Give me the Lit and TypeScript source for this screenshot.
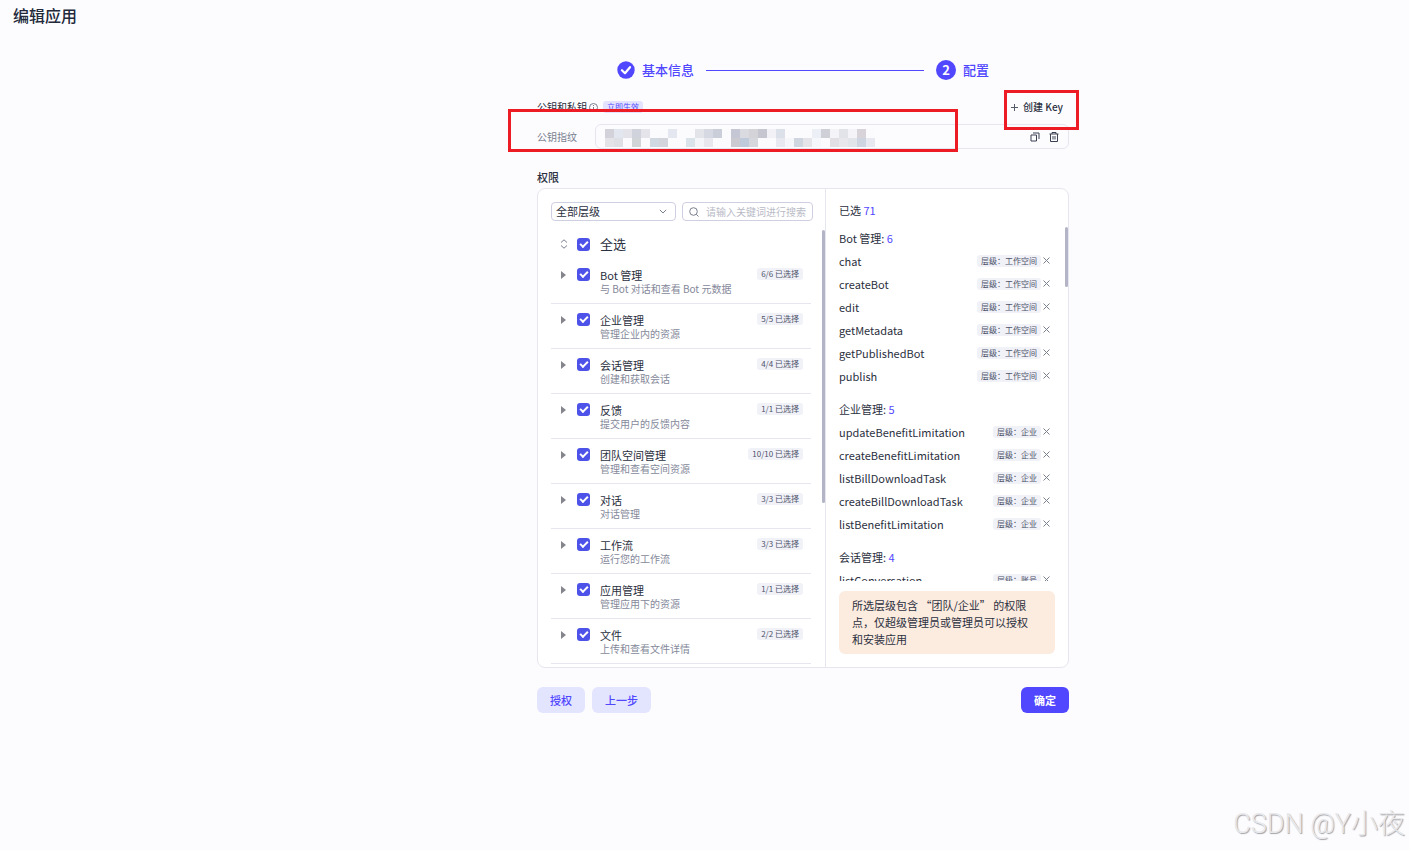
import { LitElement, html, css } from "lit";
import { customElement, state } from "lit/decorators.js";

interface Category {
  name: string;
  desc: string;
  count: number;
}

interface Group {
  name: string;
  level: string;
  total: number;
  items: string[];
}

const CATEGORIES: Category[] = [
  { name: "Bot 管理", desc: "与 Bot 对话和查看 Bot 元数据", count: 6 },
  { name: "企业管理", desc: "管理企业内的资源", count: 5 },
  { name: "会话管理", desc: "创建和获取会话", count: 4 },
  { name: "反馈", desc: "提交用户的反馈内容", count: 1 },
  { name: "团队空间管理", desc: "管理和查看空间资源", count: 10 },
  { name: "对话", desc: "对话管理", count: 3 },
  { name: "工作流", desc: "运行您的工作流", count: 3 },
  { name: "应用管理", desc: "管理应用下的资源", count: 1 },
  { name: "文件", desc: "上传和查看文件详情", count: 2 },
];

const GROUPS: Group[] = [
  {
    name: "Bot 管理",
    level: "工作空间",
    total: 6,
    items: ["chat", "createBot", "edit", "getMetadata", "getPublishedBot", "publish"],
  },
  {
    name: "企业管理",
    level: "企业",
    total: 5,
    items: [
      "updateBenefitLimitation",
      "createBenefitLimitation",
      "listBillDownloadTask",
      "createBillDownloadTask",
      "listBenefitLimitation",
    ],
  },
  {
    name: "会话管理",
    level: "账号",
    total: 4,
    items: ["listConversation"],
  },
];

/* Two rows of 9px cells that cover the key fingerprint. */
const MASK: string[][] = [
  ["#d3d2da", "#e2e6ee", "#e5e3ea", "#d0d3dc", "#e5e4ea", "", "", "#e4e7f0", "", "", "#e3e4e9", "#d6d9e2", "#c9ced9", "", "#c5c7d5", "#d9dbe0", "#d3d3d8", "#c6c6d1", "#f2f2f6", "#dce0e8", "", "", "", "#eceff6", "#cfcfd8", "#f4f4f8", "#e2e3e9", "#f3f3f8", "#d8d3d8", ""],
  ["#e4e3e8", "#dfe0e5", "", "#d1d5d8", "", "#d0d9e2", "#d4d4dc", "", "", "#dae2ea", "#f4f5f9", "#e7e7ed", "", "", "#cbcad0", "#bfcada", "#d6d7dc", "", "", "#e8e9f0", "#f5f6fa", "#d0d6e0", "#e5e4e9", "#f5f7fb", "", "#e2dfe4", "#e7e7ec", "#e1e5ea", "#ced5e0", "#e8e8f0"],
];

@customElement("app-root")
export class AppRoot extends LitElement {
  @state() private groups = GROUPS;

  static styles = css`
    :host {
      display: block;
      position: relative;
      min-height: 100vh;
      overflow: hidden;
      box-sizing: border-box;
      background: #fcfcff;
      color: #2b3040;
      font-family: "Noto Sans CJK SC", "Noto Sans", sans-serif;
      font-size: 11px;
      line-height: 16px;
    }
    *, *::after { box-sizing: border-box; }
    button, input, select { font: inherit; color: inherit; margin: 0; }
    button { border: 0; padding: 0; background: none; cursor: pointer; }
    svg { display: block; flex: none; }
    h1, h2, h3, p, ul { margin: 0; padding: 0; font: inherit; list-style: none; }

    .title { padding: 3px 13px 4px; font-size: 16px; line-height: 24px; font-weight: 500; color: #22293a; }
    main { padding: 29px 0 0 197px; }
    .content { width: 532px; max-width: 100%; margin: 0 auto; }

    .steps {
      display: flex; align-items: center; justify-content: center;
      height: 20px; font-size: 13px; font-weight: 500; color: #5147ff;
    }
    .step { display: flex; align-items: center; gap: 7px; }
    .line { width: 218px; height: 1px; margin: 0 12px; background: #5147ff; }
    .num {
      display: grid; place-items: center; width: 20px; height: 20px; border-radius: 50%;
      background: #5147ff; color: #fff; line-height: 20px; font-weight: 700;
    }

    .keys { position: relative; margin-top: 15px; font-size: 10px; }
    .keyhead { display: flex; align-items: center; height: 24px; }
    .keyhead .info { margin: 0 5px 0 2px; color: #7a7f8e; }
    .now { padding: 0 4px; border-radius: 3px; background: #e3e3ff; color: #5147ff; font-size: 8px; line-height: 12px; }
    .create { display: flex; align-items: center; gap: 5px; margin-left: auto; padding: 4px 6px; font-weight: 500; }
    .create svg { color: #555a69; }

    .keyrow { display: flex; align-items: center; height: 25px; margin-top: 5px; color: #7a7f8e; }
    .field {
      display: flex; align-items: flex-start; flex: 1; height: 25px; margin-left: 18px; padding: 4px 9px 0;
      border: 1px solid #e6e6f0; border-radius: 6px; color: #3a4052;
    }
    .mask { display: grid; grid-template-columns: repeat(30, 9px); grid-auto-rows: 9px; }
    .actions { display: flex; gap: 9px; margin-left: auto; padding-top: 3px; }

    .label { margin-top: 20px; font-weight: 500; }
    .panel {
      display: grid; grid-template-columns: 288px 1fr; height: 480px; margin-top: 3px;
      border: 1px solid #e6e6f0; border-radius: 8px; background: #fff;
    }
    .left { position: relative; overflow: hidden; padding: 13px 12px 0 13px; border-right: 1px solid #e6e6f0; }
    .filters { display: flex; gap: 6px; }
    .box {
      position: relative; display: flex; align-items: center; height: 19px;
      border: 1px solid #cfcfe2; border-radius: 4px; background: #fff;
    }
    .level { flex: none; width: 125px; }
    .level select { appearance: none; width: 100%; height: 17px; padding: 0 4px; border: 0; outline: 0; background: none; line-height: 15px; }
    .level svg { position: absolute; right: 8px; pointer-events: none; }
    .search { flex: 1; min-width: 0; padding-left: 6px; gap: 7px; color: #7a7f8e; }
    .search input { flex: 1; min-width: 0; height: 17px; padding: 0; border: 0; outline: 0; background: none; font-size: 10px; }
    .search input::placeholder { color: #b8bac6; opacity: 1; }
    .all { display: flex; align-items: center; height: 20px; margin: 13px 0 5px; padding-left: 9px; font-size: 13px; }
    .all svg { color: #7a7f8e; margin-right: 9px; }
    .check {
      appearance: none; flex: none; width: 13px; height: 13px; margin: 0; border-radius: 3px; background: #4d53e8;
      display: grid; place-items: center;
    }
    .check::after {
      content: ""; width: 8px; height: 5px; margin-top: -2px;
      border-left: 2px solid #fff; border-bottom: 2px solid #fff; rotate: -45deg;
    }
    .check:not(:checked) { background: #fff; border: 1px solid #cfcfe2; }
    .all label { margin-left: 10px; }
    .cat { display: flex; align-items: flex-start; height: 45px; margin-right: 2px; padding: 9px 8px 0 10px; border-bottom: 1px solid #e6e6f0; }
    .arrow { width: 5px; height: 13px; margin-right: 11px; display: grid; place-items: center; color: #85868d; }
    .cat label { flex: 1; margin-left: 10px; line-height: 15px; }
    .cat .desc { display: block; font-size: 10px; line-height: 12px; color: #85899a; }
    .tag { padding: 0 4px; border-radius: 3px; background: #f1f1f8; color: #4c5268; font-size: 8px; line-height: 12px; white-space: nowrap; }
    .bar { position: absolute; right: 0; width: 3px; border-radius: 2px; background: #b3b5c6; }
    .left .bar { top: 41px; height: 273px; }
    .right .bar { top: 38px; height: 60px; }

    .right { position: relative; display: flex; flex-direction: column; min-height: 0; padding: 13px 13px 13px; }
    .count { color: #5147ff; }
    .picked { flex: 1; overflow: hidden; min-height: 0; margin-top: 9px; }
    .group { margin-bottom: 10px; }
    .group h3 { line-height: 23px; }
    .item { display: flex; align-items: center; height: 23px; padding: 0 5px 2px 0; }
    .item .tag { margin-left: auto; }
    .item button { margin-left: 2px; color: #7a7f8e; }
    .notice { margin-top: 10px; padding: 6px 18px 6px 13px; border-radius: 6px; background: #fcebdf; line-height: 17px; }

    .footer { display: flex; gap: 7px; margin-top: 19px; }
    .btn { height: 26px; padding: 0 13px; border-radius: 6px; background: #e3e5ff; color: #5147ff; font-weight: 500; }
    .primary { margin-left: auto; background: #5147ff; color: #fff; font-weight: 700; }

    .frame { position: absolute; border: 3px solid #ed1c24; pointer-events: none; }
    .frame-key { left: -29px; top: 14px; width: 450px; height: 43px; }
    .frame-create { right: -10px; top: -5px; width: 75px; height: 40px; }
    .watermark {
      position: absolute; right: 4px; bottom: 6px; color: #e9e9ec; font-size: 27px; line-height: 40px; font-weight: 300;
      font-family: Roboto, "Noto Sans CJK SC", sans-serif;
      text-shadow: 1px 1px 1px #a0a0a4; pointer-events: none;
    }
  `;

  private remove(group: Group, item: string) {
    this.groups = this.groups.map((g) =>
      g === group ? { ...g, total: g.total - 1, items: g.items.filter((i) => i !== item) } : g
    );
  }

  render() {
    return html`
      <h1 class="title">编辑应用</h1>
      <main>
        <div class="content">
          <div class="steps">
            <div class="step">
              <svg width="18" height="18" viewBox="0 0 18 18">
                <circle cx="9" cy="9" r="8.7" fill="#5147ff" />
                <path d="M4.9 9.2 8 12.2 13 6.2" fill="none" stroke="#fff" stroke-width="2.2" stroke-linecap="round" stroke-linejoin="round" />
              </svg>
              <span>基本信息</span>
            </div>
            <div class="line"></div>
            <div class="step"><span class="num">2</span><span>配置</span></div>
          </div>

          <section class="keys">
            <div class="keyhead">
              <h2>公钥和私钥</h2>
              <svg class="info" width="9" height="9" viewBox="0 0 9 9" fill="none" stroke="currentColor">
                <circle cx="4.5" cy="4.5" r="4" />
                <path d="M4.5 4v3M4.5 2v1" />
              </svg>
              <span class="now">立即生效</span>
              <button class="create">
                <svg width="7" height="7" viewBox="0 0 7 7" stroke="currentColor"><path d="M3.5 0v7M0 3.5h7" /></svg>
                创建 Key
              </button>
            </div>
            <div class="keyrow">
              <span>公钥指纹</span>
              <div class="field">
                <div class="mask">
                  ${MASK.map((row) => row.map((c) => html`<i style="background:${c || "#fbfbfe"}"></i>`))}
                </div>
                <div class="actions">
                  <button aria-label="复制">
                    <svg width="10" height="10" viewBox="0 0 10 10" fill="none" stroke="currentColor">
                      <path d="M1 3h5.5v6H1zM3 1h6v6" />
                    </svg>
                  </button>
                  <button aria-label="删除">
                    <svg width="10" height="10" viewBox="0 0 10 10" fill="none" stroke="currentColor">
                      <path d="M.5 2h9M3 2V.5h4V2M1.5 2v7.5h7V2M4 4v3.5M6 4v3.5" />
                    </svg>
                  </button>
                </div>
              </div>
            </div>
            <div class="frame frame-key"></div>
            <div class="frame frame-create"></div>
          </section>

          <h2 class="label">权限</h2>
          <section class="panel">
            <div class="left">
              <div class="filters">
                <div class="box level">
                  <select aria-label="层级"><option>全部层级</option></select>
                  <svg width="8" height="5" viewBox="0 0 8 5" fill="none" stroke="#7a7f8e"><path d="M.8.8 4 4 7.2.8" /></svg>
                </div>
                <div class="box search">
                  <svg width="10" height="10" viewBox="0 0 10 10" fill="none" stroke="currentColor">
                    <circle cx="4.5" cy="4.5" r="3.8" /><path d="M7.3 7.3 9.5 9.5" />
                  </svg>
                  <input type="text" aria-label="搜索" placeholder="请输入关键词进行搜索" />
                </div>
              </div>
              <div class="all">
                <svg width="8" height="10" viewBox="0 0 8 10" fill="none" stroke="currentColor">
                  <path d="M1 3.5 4 .8 7 3.5M1 6.5 4 9.2 7 6.5" />
                </svg>
                <input class="check" type="checkbox" id="all" checked />
                <label for="all">全选</label>
              </div>
              ${CATEGORIES.map(
                (c, i) => html`
                  <div class="cat">
                    <button class="arrow" aria-label="展开">
                      <svg width="5" height="8" viewBox="0 0 5 8" fill="currentColor"><path d="M0 0 5 4 0 8z" /></svg>
                    </button>
                    <input class="check" type="checkbox" id="cat-${i}" checked />
                    <label for="cat-${i}">${c.name}<span class="desc">${c.desc}</span></label>
                    <span class="tag">${c.count}/${c.count} 已选择</span>
                  </div>
                `
              )}
              <div class="bar"></div>
            </div>
            <div class="right">
              <p>已选 <span class="count">71</span></p>
              <div class="picked">
                ${this.groups.map(
                  (g) => html`
                    <div class="group">
                      <h3>${g.name}: <span class="count">${g.total}</span></h3>
                      <ul>
                        ${g.items.map(
                          (item) => html`
                            <li class="item">
                              <span>${item}</span>
                              <span class="tag">层级：${g.level}</span>
                              <button aria-label="移除" @click=${() => this.remove(g, item)}>
                                <svg width="7" height="7" viewBox="0 0 7 7" stroke="currentColor"><path d="M.5.5l6 6M6.5.5l-6 6" /></svg>
                              </button>
                            </li>
                          `
                        )}
                      </ul>
                    </div>
                  `
                )}
              </div>
              <p class="notice">所选层级包含 “团队/企业” 的权限点，仅超级管理员或管理员可以授权和安装应用</p>
              <div class="bar"></div>
            </div>
          </section>

          <div class="footer">
            <button class="btn">授权</button>
            <button class="btn">上一步</button>
            <button class="btn primary">确定</button>
          </div>
        </div>
      </main>
      <div class="watermark">CSDN @Y小夜</div>
    `;
  }
}
